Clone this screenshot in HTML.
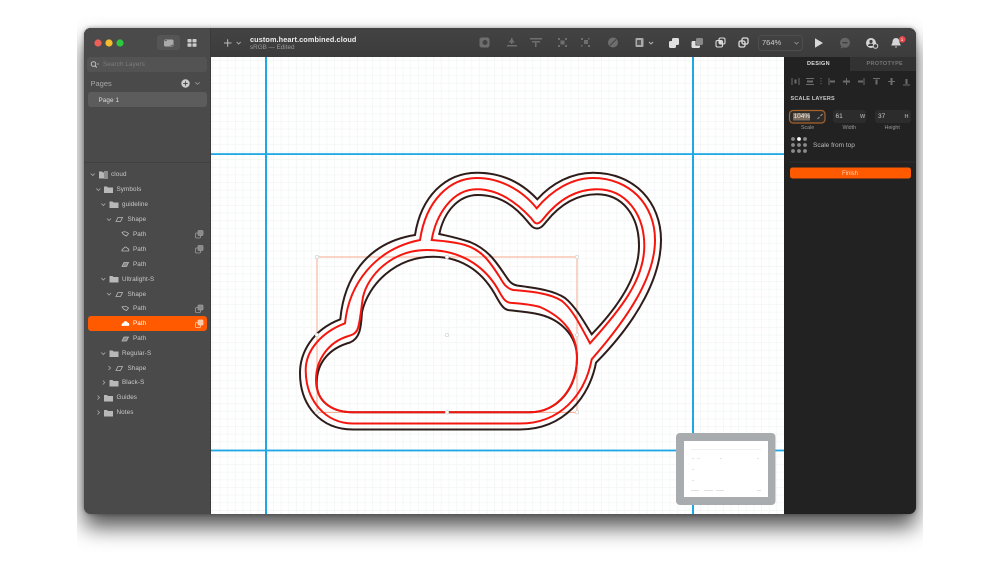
<!DOCTYPE html>
<html><head><meta charset="utf-8"><style>
html{background:#fff}
html,body{margin:0;padding:0;width:1000px;height:563px;overflow:hidden}
body{position:relative;font-family:"Liberation Sans",sans-serif;background:#fff;filter:blur(.35px)}
#clip{position:absolute;left:77px;top:0;width:846px;height:563px;overflow:hidden}
#win{position:absolute;left:7px;top:28px;width:832px;height:486px;border-radius:7px;background:#444;box-shadow:0 13px 22px rgba(0,0,0,.68),0 0 4px rgba(0,0,0,.35);overflow:hidden}
.a{position:absolute;white-space:nowrap;line-height:10px}
svg{position:absolute;left:0;top:0;overflow:visible}
.t{font-size:6.3px;color:#c8c8c8;letter-spacing:.1px;margin-top:.6px}
</style></head><body>
<div id="clip"><div id="win"></div></div>
<div class="a" style="left:84px;top:28px;width:127px;height:486px;background:#4a4a4a;border-radius:7px 0 0 7px"></div>
<div class="a" style="left:84px;top:28px;width:832px;height:29px;background:linear-gradient(#434343,#3c3c3c);border-radius:7px 7px 0 0"></div>
<div class="a" style="left:84px;top:28px;width:127px;height:29px;background:#4a4a4a;border-radius:7px 0 0 0"></div>
<div class="a" style="left:210px;top:28px;width:1px;height:486px;background:#3a3a3a"></div>
<div class="a" style="left:211px;top:57px;width:573px;height:457px;background-color:#fff;background-image:linear-gradient(#f5f7f7 1px,transparent 1px),linear-gradient(90deg,#f5f7f7 1px,transparent 1px);background-size:7.64px 7.64px;background-position:1px 3px"></div>
<div class="a" style="left:784px;top:57px;width:132px;height:457px;background:#222;border-radius:0 0 7px 0"></div>
<div class="a" style="left:850px;top:57px;width:66px;height:14px;background:#323232"></div>

<svg width="1000" height="563" viewBox="0 0 1000 563" fill="none">
<g fill="#1ea9e6"><rect x="265" y="57" width="2" height="457"/><rect x="692" y="57" width="2" height="457"/><rect x="211" y="153.2" width="573" height="1.8"/><rect x="211" y="449.6" width="573" height="1.8"/></g>
<rect x="317" y="257" width="260" height="155.4" stroke="#f6a98c" stroke-width="1"/>
<g stroke="#2d1c1a" stroke-width="2" stroke-linejoin="miter">
<path d="M340.3,319.3C344,280 365,243 415,235C421,197 445,172.7 477,172.7C502,172.7 522,183 537.3,199.3C552,183 572,172.7 593,172.7C635,172.7 661,203 661,240C661,275 640,318 596,362.7C590,395 565,429.5 520,429.5L353,429.5C320,429.5 300,405 300,373C300,353 312,330 340.3,319.3Z"/>
<path d="M439.3,234C444,212 458,195 478,195C500,195 515,206 528,222C532,227 534,228.5 537,228.5C540,228.5 542,227 546,222C558,207 574,194.3 597,194.3C622,194.3 639,215 639,246C639,275 620,305 591.7,334.3C583,320 575,306 565,298C553,290 535,288 517,285.5C510,284 508,279 505,275C495,260 487,249 470,242C458,238 448,236 439.3,234Z"/>
<path d="M353,412.3L530,412.3C558,412.3 577,388 577,358C577,335 560,318 535,313.5C525,311.5 515,311 508,310C503,309 500,303 497,298C485,275 465,256.7 433,256.7C395,256.7 368,285 362,312C361,325 361,338 350,342.5C330,348 316.7,362 316.7,383C316.7,400 330,412.3 353,412.3Z"/>
</g>
<g stroke="#f5170f" stroke-width="2" stroke-linejoin="miter">
<path d="M345,323.3C349,284 375,249 420,240C426,200 450,178 477,178C500,178 522,190 536.7,208.3C552,190 572,178 593,178C630,178 655,205 655,240C655,272 635,310 591.7,359.3C585,395 560,423.5 520,423.5L353,423.5C325,423.5 305.7,400 305.7,370C305.7,350 322,332 345,323.3Z"/>
<path d="M431.7,240C436,215 452,189.3 477,189.3C500,189.3 518,204 531,218C534,222 535,223.5 537,223.5C539,223.5 541,222 544,218C556,203 573,189.3 597,189.3C625,189.3 644.3,213 644.3,246C644.3,280 620,310 590,343.3C580,325 573,310 562,301C550,293 530,291.5 513.3,290C505,288 503,282 499,276C490,262 482,250 465,245C455,242 445,241 431.7,240Z"/>
<path d="M353,412.3L530,412.3C557,412.3 577,388 577,358C577,335 565,318 540,307C530,304 520,303.5 510,302.7C505,302 503,298 500,293C488,270 465,250 427,250C392,250 368,275 363,297C361,310 360,322 358,328C356,334 352,335 347,336.5C330,342 316,358 316,380C316,400 330,412.3 353,412.3Z"/>
</g>
<g fill="#fff" stroke="#cfcfcf" stroke-width=".7"><circle cx="317" cy="257" r="1.7"/><circle cx="447" cy="257" r="1.7"/><circle cx="577" cy="257" r="1.7"/><circle cx="317" cy="335" r="1.7"/><circle cx="447" cy="335" r="1.7"/><circle cx="577" cy="335" r="1.7"/><circle cx="317" cy="412.4" r="1.7"/><circle cx="447" cy="412.4" r="1.7"/><circle cx="577" cy="412.4" r="1.7"/></g>
<rect x="676" y="433" width="99.5" height="72" rx="4" fill="#a8acaf"/>
<rect x="684" y="441" width="84" height="56" fill="#fff"/>
<g fill="#e2e2e2"><rect x="691" y="490" width="8" height="1"/><rect x="704" y="490" width="9" height="1"/><rect x="716" y="490" width="8" height="1"/><rect x="757" y="490" width="4" height="1"/><rect x="691" y="449" width="70" height=".5"/><rect x="692" y="458" width="2" height="1"/><rect x="697" y="458" width="3" height="1" fill="#eec"/><rect x="720" y="458" width="2" height="1"/><rect x="757" y="458" width="2" height="1"/><rect x="692" y="469" width="2" height="1"/><rect x="692" y="480" width="2" height="1"/></g>

<circle cx="98" cy="43" r="3.6" fill="#ee5f57"/><circle cx="109" cy="43" r="3.6" fill="#f5bd2e"/><circle cx="120" cy="43" r="3.6" fill="#2cc840"/>
<rect x="157" y="35" width="23" height="15" rx="3" fill="#555"/>
<rect x="164" y="39.5" width="9.5" height="7" rx="1.5" fill="#aaa"/><path d="M165,41.5V40.5H167M172.5,44.5V45.5H170.5" stroke="#555" stroke-width=".7"/>
<g fill="#ccc"><rect x="187.5" y="39" width="4" height="3.4" rx=".7"/><rect x="192.5" y="39" width="4" height="3.4" rx=".7"/><rect x="187.5" y="43.4" width="4" height="3.4" rx=".7"/><rect x="192.5" y="43.4" width="4" height="3.4" rx=".7"/></g>
<rect x="87" y="57" width="120" height="15" rx="3" fill="#535353"/>
<rect x="88" y="92" width="119" height="15" rx="3" fill="#5c5c5c"/>
<rect x="88" y="316" width="119" height="15" rx="3" fill="#ff5a00"/>
<rect x="84" y="162" width="126" height="1" fill="#404040"/>
<circle cx="93.5" cy="64" r="2.3" stroke="#ccc" stroke-width=".9"/><path d="M95,65.7L96.800,67.5" stroke="#ccc" stroke-width=".9"/><path d="M97,64H99" stroke="#aaa" stroke-width=".8"/>
<circle cx="185.5" cy="83.5" r="4.2" fill="#ccc"/><path d="M183.3,83.5H187.7M185.5,81.3V85.7" stroke="#4a4a4a" stroke-width=".9"/>
<path d="M195.3,82.3L197.5,84.3L199.7,82.3" stroke="#999" stroke-width=".8"/>
<g stroke="#aaa" stroke-width=".8">
<path d="M90.8,173.5L92.8,175.5L94.8,173.5M96.3,188.5L98.3,190.5L100.3,188.5M101.3,203.5L103.3,205.500L105.3,203.5M107,218.5L109,220.5L111,218.5M101.3,278L103.3,280L105.3,278M107,293L109,295L111,293M101.3,352.5L103.3,354.5L105.3,352.5"/>
<path d="M108.5,366L110.5,368L108.5,370M102.8,380.5L104.8,382.5L102.8,384.5M97.5,395.5L99.5,397.5L97.5,399.5M97.5,410.5L99.5,412.5L97.5,414.5"/>
</g>
<g fill="#b8b8b8">
<path d="M99,171.500h3l1,1h4.500v6h-8.500z"/><path d="M104,171h4v8h-4z" fill="#8d8d8d"/>
<path d="M104,186.500h3l1,1h5v5.500h-9z"/>
<path d="M109.5,201.500h3l1,1h5v5.500h-9z"/>
<path d="M109.5,276h3l1,1h5v5.500h-9z"/>
<path d="M109.5,350.500h3l1,1h5v5.500h-9z"/>
<path d="M109.5,380h3l1,1h5v5.500h-9z"/>
<path d="M104,395h3l1,1h5v5.500h-9z"/>
<path d="M104,410h3l1,1h5v5.500h-9z"/>
</g>
<g stroke="#bbb" stroke-width=".8">
<path d="M116,221.5L118,217.5H122.5L120.5,221.5Z"/><path d="M116,296.5L118,292.5H122.5L120.5,296.5Z"/><path d="M116,370.5L118,366.5H122.5L120.5,370.5Z"/>
<path d="M122,232.5C124,231 127,232 128.5,233.5L126.5,236C125,235.5 123,234 122,232.5Z"/>
<path d="M122,307C124,305.5 127,306.5 128.5,308L126.5,310.5C125,310 123,308.5 122,307Z"/>
<path d="M122,251C121.5,249 123.5,249 124,248C125,246.5 127,247 127.5,248.5C129,248.5 129.5,251 128,251Z"/>
<path d="M122,266.5L124,262.5H128.5L126.5,266.5Z" fill="#888"/>
<path d="M122,341L124,337H128.5L126.5,341Z" fill="#888"/>
<path d="M122,325.5C121.5,323.5 123.5,323.5 124,322.5C125,321 127,321.5 127.5,323C129,323 129.5,325.5 128,325.5Z" stroke="#fff" fill="#fff"/>
</g>
<g stroke="#9a9a9a" stroke-width=".8" fill="#8a8a8a">
<rect x="195.5" y="233" width="5" height="5" rx="1" fill="none"/><rect x="198" y="230.5" width="5" height="5" rx="1"/>
<rect x="195.5" y="248" width="5" height="5" rx="1" fill="none"/><rect x="198" y="245.5" width="5" height="5" rx="1"/>
<rect x="195.5" y="307.5" width="5" height="5" rx="1" fill="none"/><rect x="198" y="305" width="5" height="5" rx="1"/>
</g>
<g stroke="#ffd0b0" stroke-width=".8" fill="#ffc8a5"><rect x="195.5" y="322.5" width="5" height="5" rx="1" fill="none"/><rect x="198" y="320" width="5" height="5" rx="1"/></g>

<path d="M224,43H231.5M227.7,39.2V46.8" stroke="#bbb" stroke-width="1"/>
<path d="M236.7,42L238.7,44L240.7,42" stroke="#aaa" stroke-width=".9"/>
<g fill="#6e6e6e">
<path d="M481,37.5h7l1.5,1.5v7l-1.5,1.5h-7l-1.5-1.5v-7z"/>
<rect x="507" y="45" width="10" height="1.5"/><rect x="511" y="38" width="1.5" height="6"/><path d="M508.5,42.5L511.7,38.5L514.8,42.5z"/>
<rect x="530" y="38" width="12" height="1.5"/><rect x="532" y="41" width="8" height="1.5"/><rect x="535" y="41" width="1.5" height="6"/>
<rect x="558" y="38" width="2" height="2"/><rect x="565" y="38" width="2" height="2"/><rect x="558" y="45" width="2" height="2"/><rect x="565" y="45" width="2" height="2"/><rect x="560.5" y="40.5" width="4" height="4"/>
<rect x="581" y="38" width="2" height="2"/><rect x="588" y="45" width="2" height="2"/><rect x="584" y="40" width="4" height="4"/><rect x="588" y="38" width="1.5" height="1.5"/><rect x="581" y="45" width="1.5" height="1.5"/>
<circle cx="613" cy="42.5" r="5"/>
</g>
<circle cx="485" cy="42.5" r="2.5" fill="#444"/>
<path d="M610,45.5L616,39.5" stroke="#444" stroke-width="1"/>
<rect x="635.5" y="38" width="8" height="9" rx="1" fill="#aaa"/><rect x="637" y="40" width="4" height="5" fill="#555"/>
<path d="M649,42L651,44L653,42" stroke="#bbb" stroke-width=".9"/>
<rect x="669" y="41" width="7" height="7" rx="1.5" fill="#e0e0e0"/><rect x="672" y="38" width="7" height="7" rx="1.5" fill="#e0e0e0"/>
<rect x="696" y="38" width="7" height="7" rx="1.5" fill="#888"/><path d="M691.5,42.5a1.5,1.5 0 0 1 1.5,-1.5h2.5v4.5h4.5v1a1.5,1.5 0 0 1 -1.5,1.5h-5.5a1.5,1.5 0 0 1 -1.5,-1.5z" fill="#e0e0e0"/>
<rect x="716" y="40.5" width="6.5" height="6.5" rx="1.5" stroke="#ddd" stroke-width="1.1"/><rect x="719" y="38" width="6" height="6" rx="1.5" stroke="#ddd" stroke-width="1.1"/><rect x="719.3" y="41" width="2.6" height="2.6" fill="#ddd"/>
<rect x="739" y="41" width="6" height="6" rx="1.5" stroke="#ddd" stroke-width="1.3"/><rect x="742" y="38" width="6" height="6" rx="1.5" stroke="#ddd" stroke-width="1.3"/>
<rect x="758.5" y="35.5" width="44" height="15" rx="3" stroke="#4e4e4e" stroke-width="1"/>
<path d="M794.5,42L796.5,44L798.5,42" stroke="#999" stroke-width=".8"/>
<path d="M815,38.2L823,43L815,47.8Z" fill="#d8d8d8"/>
<circle cx="845" cy="42.8" r="5" fill="#666"/><path d="M841.5,46l-1,2.5 3,-1.3z" fill="#666"/><rect x="842.5" y="42" width="5" height="1.4" fill="#3f3f3f"/>
<circle cx="871" cy="43" r="5" fill="#d5d5d5"/><circle cx="871" cy="41.5" r="1.6" fill="#3f3f3f"/><path d="M868,46a3,2.5 0 0 1 6,0z" fill="#3f3f3f"/><circle cx="875.5" cy="46" r="2.3" fill="#3f3f3f" stroke="#d5d5d5" stroke-width="1"/>
<path d="M896,38c2.5,0 3.5,2 3.5,4.5l1.3,3h-9.6l1.3-3c0-2.5 1-4.5 3.5-4.5z" fill="#d5d5d5"/><path d="M894.8,46.5h2.4l-1.2,1.5z" fill="#d5d5d5"/>
<circle cx="902.3" cy="39.3" r="3.3" fill="#e5484d"/>

<g fill="#6c6c6c">
<rect x="791.5" y="78" width="1" height="7"/><rect x="798.5" y="78" width="1" height="7"/><rect x="794.5" y="79.5" width="2" height="4"/>
<rect x="806" y="78" width="8" height="1"/><rect x="806" y="84" width="8" height="1"/><rect x="807" y="80.5" width="6" height="2"/>
<rect x="820.5" y="78" width="1" height="1"/><rect x="820.5" y="80.5" width="1" height="1"/><rect x="820.5" y="83" width="1" height="1"/>
<rect x="828.5" y="78" width="1" height="7"/><rect x="830" y="80.5" width="5" height="2"/>
<rect x="846" y="78" width="1" height="7"/><rect x="843" y="80.5" width="7" height="2"/>
<rect x="863.5" y="78" width="1" height="7"/><rect x="858" y="80.5" width="5" height="2"/>
<rect x="873" y="78" width="7" height="1"/><rect x="875.5" y="79.5" width="2" height="5"/>
<rect x="888" y="81" width="7" height="1"/><rect x="890.5" y="78" width="2" height="7"/>
<rect x="903" y="84.5" width="7" height="1"/><rect x="905.5" y="79" width="2" height="5"/>
</g>
<rect x="789.5" y="110.5" width="35.5" height="12.5" rx="3.5" fill="#2b2b2b" stroke="#a8622a" stroke-width="1.2"/>
<rect x="793" y="113" width="17" height="7.5" fill="#7a6a5c"/>
<path d="M817.5,119L819.5,117M820.5,116L822.5,114" stroke="#bbb" stroke-width=".8"/>
<rect x="833" y="110" width="33" height="13" rx="3" fill="#2c2c2c"/>
<rect x="875" y="110" width="36" height="13" rx="3" fill="#2c2c2c"/>
<g fill="#8a8a8a"><circle cx="793" cy="139" r="1.9"/><circle cx="805" cy="139" r="1.9"/><circle cx="793" cy="145" r="1.9"/><circle cx="799" cy="145" r="1.9"/><circle cx="805" cy="145" r="1.9"/><circle cx="793" cy="151" r="1.9"/><circle cx="799" cy="151" r="1.9"/><circle cx="805" cy="151" r="1.9"/></g>
<circle cx="799" cy="139" r="1.9" fill="#fff"/>
<rect x="790" y="161.5" width="126" height="1" fill="#2e2e2e"/>
<rect x="790" y="167.5" width="121" height="11" rx="2.5" fill="#ff5a00"/>
</svg>

<div class="a t" style="left:103px;top:59px;color:#7d7d7d">Search Layers</div>
<div class="a" style="left:90.5px;top:79px;font-size:7.5px;color:#a8a8a8">Pages</div>
<div class="a t" style="left:98.5px;top:95px;color:#ddd">Page 1</div>
<div class="a t" style="left:111px;top:169.5px">cloud</div>
<div class="a t" style="left:116.5px;top:184.5px">Symbols</div>
<div class="a t" style="left:122px;top:199px">guideline</div>
<div class="a t" style="left:127.5px;top:214px">Shape</div>
<div class="a t" style="left:133px;top:229px">Path</div>
<div class="a t" style="left:133px;top:244px">Path</div>
<div class="a t" style="left:133px;top:259px">Path</div>
<div class="a t" style="left:122px;top:274px">Ultralight-S</div>
<div class="a t" style="left:127.5px;top:289px">Shape</div>
<div class="a t" style="left:133px;top:303.5px">Path</div>
<div class="a t" style="left:133px;top:318.5px;color:#fff">Path</div>
<div class="a t" style="left:133px;top:333px">Path</div>
<div class="a t" style="left:122px;top:348px">Regular-S</div>
<div class="a t" style="left:127.5px;top:363px">Shape</div>
<div class="a t" style="left:122px;top:377.5px">Black-S</div>
<div class="a t" style="left:116.5px;top:392.5px">Guides</div>
<div class="a t" style="left:116.5px;top:407.5px">Notes</div>
<div class="a" style="left:250px;top:35px;font-size:7.3px;font-weight:bold;color:#eee;letter-spacing:.1px">custom.heart.combined.cloud</div>
<div class="a" style="left:250px;top:43px;font-size:6.3px;color:#999">sRGB — Edited</div>
<div class="a" style="left:762px;top:38px;font-size:7.5px;color:#ccc">764%</div>
<div class="a" style="left:900.8px;top:34.5px;font-size:4.5px;color:#fff">1</div>
<div class="a" style="left:807px;top:59px;font-size:5.5px;font-weight:bold;color:#ddd;letter-spacing:.3px">DESIGN</div>
<div class="a" style="left:866.5px;top:59px;font-size:5.5px;font-weight:bold;color:#777;letter-spacing:.3px">PROTOTYPE</div>
<div class="a" style="left:790.5px;top:94px;font-size:5.5px;font-weight:bold;color:#c8c8c8;letter-spacing:.2px">SCALE LAYERS</div>
<div class="a" style="left:793.5px;top:112px;font-size:6.5px;color:#eee">104%</div>
<div class="a" style="left:835.5px;top:112px;font-size:6.5px;color:#ccc">61</div>
<div class="a" style="left:860px;top:112px;font-size:5.5px;font-weight:bold;color:#999">W</div>
<div class="a" style="left:878px;top:112px;font-size:6.5px;color:#ccc">37</div>
<div class="a" style="left:904.5px;top:112px;font-size:5.5px;font-weight:bold;color:#999">H</div>
<div class="a" style="left:801px;top:123px;font-size:5.3px;color:#999">Scale</div>
<div class="a" style="left:842.5px;top:123px;font-size:5.3px;color:#999">Width</div>
<div class="a" style="left:884.5px;top:123px;font-size:5.3px;color:#999">Height</div>
<div class="a" style="left:813px;top:141px;font-size:6.5px;color:#bbb">Scale from top</div>
<div class="a" style="left:842px;top:168.5px;font-size:6px;color:#ffd5bd">Finish</div>
</body></html>
